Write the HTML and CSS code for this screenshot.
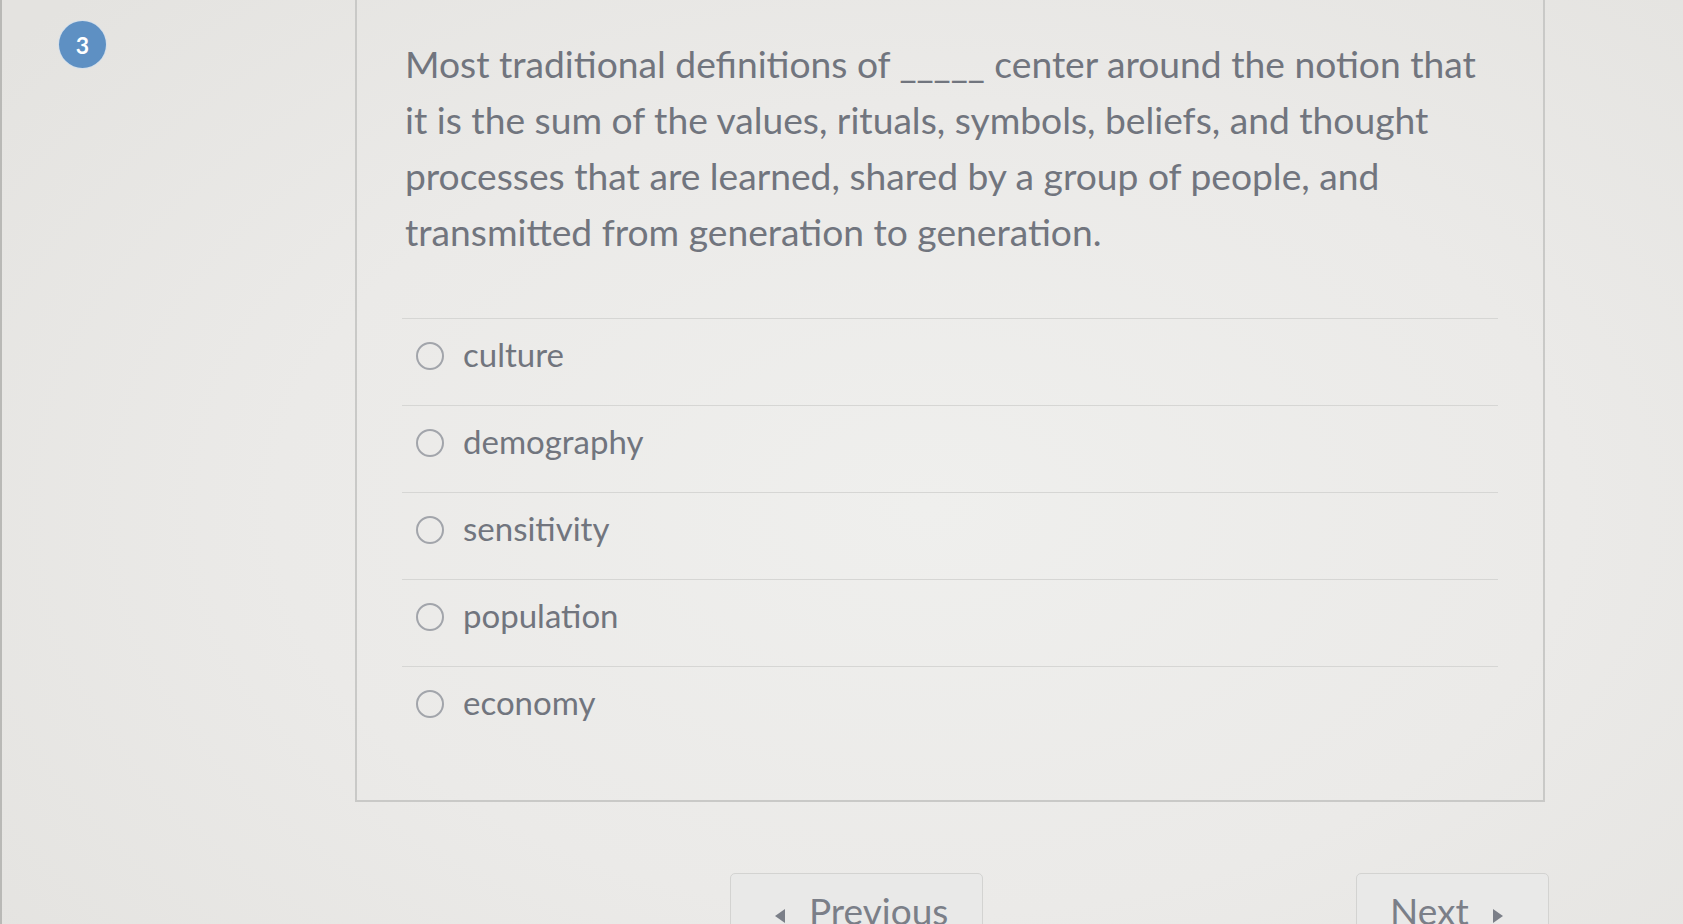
FILE: index.html
```html
<!DOCTYPE html>
<html lang="en">
<head>
<meta charset="utf-8">
<title>Question 3</title>
<link rel="stylesheet" href="styles.css">
</head>
<body>
<div class="page">
  <div class="gutter">
    <div class="badge">3</div>
  </div>
  <div class="main">
    <section class="panel">
      <p class="question">Most traditional definitions of _____ center around the notion that it is the sum of the values, rituals, symbols, beliefs, and thought processes that are learned, shared by a group of people, and transmitted from generation to generation.</p>
      <ul class="options">
        <li class="option"><span class="radio"></span><span class="label">culture</span></li>
        <li class="option"><span class="radio"></span><span class="label">demography</span></li>
        <li class="option"><span class="radio"></span><span class="label">sensitivity</span></li>
        <li class="option"><span class="radio"></span><span class="label">population</span></li>
        <li class="option"><span class="radio"></span><span class="label">economy</span></li>
      </ul>
    </section>
    <nav class="nav">
      <button class="btn btn-prev"><span class="tri tri-left"></span>Previous</button>
      <button class="btn btn-next">Next<span class="tri tri-right"></span></button>
    </nav>
  </div>
</div>
</body>
</html>
```
FILE: styles.css
```css
html, body {
  margin: 0;
  padding: 0;
  height: 100%;
  overflow: hidden;
}
body {
  font-family: Lato, "Open Sans", "Liberation Sans", sans-serif;
  color: #71757e;
  background: radial-gradient(ellipse 70% 80% at 55% 55%, #efefed 0%, #ebeae8 55%, #e4e3e0 100%);
  border-left: 2px solid #b9b9b6;
  box-sizing: border-box;
}
.page {
  display: grid;
  grid-template-columns: 353px 1190px 1fr;
  height: 924px;
}
.gutter {
  padding: 21px 0 0 57px;
}
.badge {
  width: 47px;
  height: 47px;
  border-radius: 50%;
  background: #5e90c3;
  color: #fff;
  font-weight: 700;
  font-size: 23px;
  display: flex;
  align-items: center;
  justify-content: center;
  box-shadow: 0 0 0 1px #d6e0ea;
}
.main {
  display: flex;
  flex-direction: column;
}
.panel {
  border: 2px solid #c9c9c7;
  border-top: none;
  padding: 36px 45px 47px 45px;
}
.question {
  margin: 0 0 58px 3px;
  font-size: 37.2px;
  line-height: 56px;
  width: 1091px;
}
.options {
  list-style: none;
  margin: 0;
  padding: 0;
}
.option {
  display: flex;
  align-items: center;
  height: 87px;
  border-top: 1.5px solid #d6d6d4;
  padding: 0 0 13px 14px;
  box-sizing: border-box;
  font-size: 33px;
}
.radio {
  width: 24px;
  height: 24px;
  border: 2px solid #a2a5ab;
  border-radius: 50%;
  margin-right: 19px;
  flex: none;
}
.label {
  position: relative;
  top: -2px;
}
.nav {
  display: flex;
  justify-content: space-between;
  padding: 71px 0 0 375px;
  margin-right: -4px;
}
.btn {
  font-family: inherit;
  color: #7b7f88;
  background: #e9e9e8;
  border: 1.5px solid #d3d3d1;
  border-radius: 5px;
  height: 80px;
  font-size: 37px;
  display: flex;
  align-items: flex-start;
  padding: 14px 0 0 0;
  box-sizing: border-box;
}
.btn-prev {
  width: 253px;
  padding-left: 44px;
}
.btn-next {
  width: 193px;
  padding-left: 33px;
}
.tri {
  width: 0;
  height: 0;
  border-top: 7px solid transparent;
  border-bottom: 7px solid transparent;
  align-self: flex-start;
  margin-top: 21px;
}
.tri-left {
  border-right: 10px solid #7b7f88;
  margin-right: 24px;
}
.tri-right {
  border-left: 10px solid #7b7f88;
  margin-left: 24px;
}
```
